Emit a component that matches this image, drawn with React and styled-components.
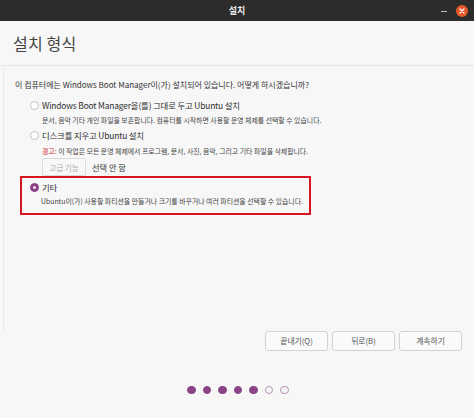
import React from "react";
import styled, { createGlobalStyle } from "styled-components";

const Global = createGlobalStyle`
  html, body { margin: 0; padding: 0; background: #f7f7f7; }
  body { font-family: "Noto Sans CJK KR", "Noto Sans", sans-serif; }
  * { box-sizing: border-box; }
`;

const Window = styled.div`
  width: 474px;
  height: 418px;
  display: flex;
  flex-direction: column;
  background: #f7f7f7;
  overflow: hidden;
`;

const TitleBar = styled.div`
  height: 21px;
  flex: none;
  background: #2c2c2c;
  display: grid;
  grid-template-columns: 1fr auto 1fr;
  align-items: center;
  padding: 0 6px;
`;

const Title = styled.div`
  grid-column: 2;
  color: #e8e8e8;
  font-size: 9px;
  font-weight: 700;
  line-height: 21px;
`;

const Controls = styled.div`
  grid-column: 3;
  justify-self: end;
  display: flex;
  align-items: center;
  gap: 9px;
`;

const Minimize = styled.div`
  width: 6px;
  height: 1px;
  background: #bdbdbd;
  margin-top: 2px;
`;

const Close = styled.div`
  width: 12px;
  height: 12px;
  border-radius: 50%;
  background: #e4592a;
  display: flex;
  align-items: center;
  justify-content: center;
`;

const Header = styled.div`
  height: 45px;
  flex: none;
  display: flex;
  align-items: center;
  padding-left: 13px;
  border-bottom: 1px solid #e6e6e6;
  font-size: 16px;
  color: #444;
  letter-spacing: 0.2px;
`;

const Main = styled.div`
  flex: 1;
  display: flex;
  flex-direction: column;
  border-left: 1px solid #eaeaea;
  margin-left: 3px;
`;

const Question = styled.div`
  margin: 13px 0 0 11px;
  font-size: 8px;
  line-height: 12px;
  color: #333;
`;

const OptionList = styled.div`
  display: flex;
  flex-direction: column;
  padding-left: 16px;
  margin-top: 7px;
`;

const Option = styled.div`
  display: flex;
  flex-direction: column;
  width: 291px;
  padding: ${(p) => (p.$highlight ? "2px 0 6px 6px" : "0 0 0 8px")};
  border: ${(p) => (p.$highlight ? "2px solid #d8141f" : "none")};
  margin-top: ${(p) => p.$mt || 0}px;
`;

const Row = styled.label`
  display: flex;
  align-items: center;
  gap: 3px;
  height: 14px;
  font-size: 8.4px;
  letter-spacing: -0.15px;
  color: #2e2e2e;
  font-weight: 400;
  white-space: nowrap;
`;

const Radio = styled.span`
  width: 9px;
  height: 9px;
  border-radius: 50%;
  flex: none;
  margin-left: 2px;
  display: flex;
  align-items: center;
  justify-content: center;
  background: ${(p) => (p.$checked ? "#8c3f86" : "#fff")};
  border: 1px solid ${(p) => (p.$checked ? "#8c3f86" : "#c4c4c4")};
  &::after {
    content: "";
    display: ${(p) => (p.$checked ? "block" : "none")};
    width: 3px;
    height: 3px;
    border-radius: 50%;
    background: #f3e8f2;
  }
`;

const Desc = styled.div`
  padding-left: ${(p) => p.$indent || 14}px;
  font-size: 6.9px;
  line-height: 12px;
  color: #444;
  margin-top: ${(p) => p.$mt || 0}px;
  white-space: nowrap;
`;

const Warn = styled.span`
  color: #d22a2a;
`;

const AdvRow = styled.div`
  display: flex;
  align-items: center;
  gap: 6px;
  padding-left: 14px;
  margin-top: 1px;
`;

const AdvButton = styled.button`
  width: 44px;
  height: 18px;
  border: 1px solid #dcdcdc;
  border-radius: 2px;
  background: #f8f8f8;
  color: #b0b0b0;
  font-family: inherit;
  font-size: 7.6px;
  padding: 0;
`;

const AdvValue = styled.span`
  font-size: 8.2px;
  color: #333;
`;

const Footer = styled.div`
  flex: none;
  display: flex;
  flex-direction: column;
  padding-bottom: 24px;
`;

const Buttons = styled.div`
  display: flex;
  justify-content: flex-end;
  gap: 4px;
  padding-right: 12px;
`;

const Button = styled.button`
  width: 63px;
  height: 20px;
  border: 1px solid #d2d2d2;
  border-radius: 3px;
  background: #fafafa;
  color: #555;
  font-family: inherit;
  font-size: 7.8px;
  padding: 0;
`;

const Dots = styled.div`
  display: flex;
  justify-content: center;
  gap: 7px;
  margin-top: 35px;
  padding-left: 2px;
`;

const Dot = styled.span`
  width: 8.5px;
  height: 8.5px;
  border-radius: 50%;
  background: ${(p) => (p.$on ? "#8a4384" : "transparent")};
  border: 1px solid ${(p) => (p.$on ? "#8a4384" : "#b894b4")};
`;

export default function App() {
  const steps = [true, true, true, true, true, false, false];
  return (
    <Window>
      <Global />
      <TitleBar>
        <Title>설치</Title>
        <Controls>
          <Minimize />
          <Close>
            <svg width="6" height="6" viewBox="0 0 6 6">
              <path d="M1 1L5 5M5 1L1 5" stroke="#fff" strokeWidth="1.2" strokeLinecap="round" />
            </svg>
          </Close>
        </Controls>
      </TitleBar>
      <Header>설치 형식</Header>
      <Main>
        <Question>이 컴퓨터에는 Windows Boot Manager이(가) 설치되어 있습니다. 어떻게 하시겠습니까?</Question>
        <OptionList>
          <Option>
            <Row>
              <Radio />
              Windows Boot Manager을(를) 그대로 두고 Ubuntu 설치
            </Row>
            <Desc $mt={2}>문서, 음악 기타 개인 파일을 보존합니다. 컴퓨터를 시작하면 사용할 운영 체제를 선택할 수 있습니다.</Desc>
          </Option>
          <Option $mt={2}>
            <Row>
              <Radio />
              디스크를 지우고 Ubuntu 설치
            </Row>
            <Desc $mt={3}>
              <Warn>경고:</Warn> 이 작업은 모든 운영 체제에서 프로그램, 문서, 사진, 음악, 그리고 기타 파일을 삭제합니다.
            </Desc>
            <AdvRow>
              <AdvButton disabled>고급 기능</AdvButton>
              <AdvValue>선택 안 함</AdvValue>
            </AdvRow>
          </Option>
          <Option $highlight>
            <Row>
              <Radio $checked />
              기타
            </Row>
            <Desc $indent={13} $mt={1}>Ubuntu이(가) 사용할 파티션을 만들거나 크기를 바꾸거나 여러 파티션을 선택할 수 있습니다.</Desc>
          </Option>
        </OptionList>
      </Main>
      <Footer>
        <Buttons>
          <Button>끝내기(Q)</Button>
          <Button>뒤로(B)</Button>
          <Button>계속하기</Button>
        </Buttons>
        <Dots>
          {steps.map((on, i) => (
            <Dot key={i} $on={on} />
          ))}
        </Dots>
      </Footer>
    </Window>
  );
}
